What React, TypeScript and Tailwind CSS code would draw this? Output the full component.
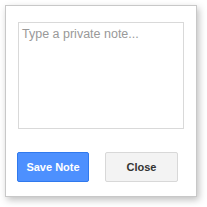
export default function App() {
  return (
    <div className="w-[207px] h-[207px] bg-white pl-[5px] pt-[5px]" style={{ fontFamily: '"Liberation Sans", Arial, sans-serif' }}>
      <div className="w-[192px] h-[192px] bg-white border border-[#c8c8c8] shadow-[2px_3px_7px_rgba(0,0,0,0.25)] pt-[16px] pl-[11px]">
        <textarea
          placeholder="Type a private note..."
          className="block w-[166px] h-[107px] ml-[1px] border border-[#d9d9d9] px-[3px] pt-[2px] text-[12.5px] text-[#333] placeholder:text-[#999] resize-none outline-none"
        />
        <div className="flex gap-[16px] mt-[23px]">
          <button className="w-[72px] h-[30px] rounded-[2px] bg-[#4d90fe] border border-[#3079ed] text-white text-[11px] font-bold">
            Save Note
          </button>
          <button className="w-[73px] h-[30px] rounded-[2px] bg-[#f3f3f3] border border-[#d8d8d8] text-[#333] text-[11px] font-bold">
            Close
          </button>
        </div>
      </div>
    </div>
  )
}
